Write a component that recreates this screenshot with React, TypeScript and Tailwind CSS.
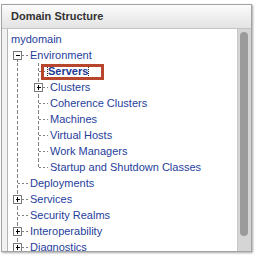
import React from "react";

type Vert = "none" | "full" | "top" | "bottom";
type Box = "plus" | "minus" | null;

type Col = { vert: Vert; horiz?: boolean; box?: Box };

type Node = {
  label: string;
  cols: Col[];
  selected?: boolean;
};

const LINE = "#808080";

function Connector({ vert, horiz, box, offset }: Col & { offset: number }) {
  const cx = offset + 0.5;
  return (
    <svg width="20" height="16" className="shrink-0 block" shapeRendering="crispEdges">
      {vert === "full" && (
        <line x1={cx} y1={0} x2={cx} y2={16} stroke={LINE} strokeDasharray="3 2" />
      )}
      {vert === "top" && <line x1={cx} y1={0} x2={cx} y2={8} stroke={LINE} strokeDasharray="3 2" />}
      {vert === "bottom" && (
        <line x1={cx} y1={box ? 13 : 8} x2={cx} y2={16} stroke={LINE} strokeDasharray="2 2" />
      )}
      {horiz && (
        <line x1={box ? offset + 5 : cx} y1={8.5} x2={20} y2={8.5} stroke={LINE} strokeDasharray="2 2" />
      )}
      {box && (
        <g>
          <rect x={offset - 3.5} y={4.5} width={8} height={8} fill="#fff" stroke="#7a7a7a" />
          <line x1={offset - 1} y1={8.5} x2={offset + 3} y2={8.5} stroke="#000" />
          {box === "plus" && <line x1={cx} y1={6} x2={cx} y2={11} stroke="#000" />}
        </g>
      )}
    </svg>
  );
}

const L1 = 9;
const L2 = 10;

const nodes: Node[] = [
  { label: "Environment", cols: [{ vert: "bottom", horiz: true, box: "minus" }] },
  { label: "Servers", cols: [{ vert: "full" }, { vert: "full", horiz: true }], selected: true },
  { label: "Clusters", cols: [{ vert: "full" }, { vert: "full", horiz: true, box: "plus" }] },
  { label: "Coherence Clusters", cols: [{ vert: "full" }, { vert: "full", horiz: true }] },
  { label: "Machines", cols: [{ vert: "full" }, { vert: "full", horiz: true }] },
  { label: "Virtual Hosts", cols: [{ vert: "full" }, { vert: "full", horiz: true }] },
  { label: "Work Managers", cols: [{ vert: "full" }, { vert: "full", horiz: true }] },
  { label: "Startup and Shutdown Classes", cols: [{ vert: "full" }, { vert: "top", horiz: true }] },
  { label: "Deployments", cols: [{ vert: "full", horiz: true }] },
  { label: "Services", cols: [{ vert: "full", horiz: true, box: "plus" }] },
  { label: "Security Realms", cols: [{ vert: "full", horiz: true }] },
  { label: "Interoperability", cols: [{ vert: "full", horiz: true, box: "plus" }] },
  { label: "Diagnostics", cols: [{ vert: "full", horiz: true, box: "plus" }] },
];

function TreeRow({ node }: { node: Node }) {
  return (
    <div className="relative flex h-4 items-center whitespace-nowrap">
      {node.cols.map((c, i) => (
        <Connector key={i} {...c} offset={i === 0 ? L1 : L2} />
      ))}
      {node.selected ? (
        <>
          <span className="ml-0 font-bold text-[#1b3a94] outline outline-1 outline-dotted outline-[#2b2b2b] leading-[11px]">
            {node.label}
          </span>
          <div className="absolute left-[33px] top-[1px] h-[16px] w-[63px] border-[3px] border-[#b8462c]" />
        </>
      ) : (
        <span className="ml-[2px] text-[#1f3e9c]">{node.label}</span>
      )}
    </div>
  );
}

export default function App() {
  return (
    <div className="w-[261px] h-[257px] bg-white pt-[4px] pl-[1px] font-['Liberation_Sans',Arial,sans-serif]">
      <div className="w-[251px] h-[248px] border border-[#a3a3a3] bg-[#f1f1f1] shadow-[1px_1px_2px_rgba(0,0,0,0.35)] flex flex-col">
        <div className="h-[24px] shrink-0 border-b border-[#c4c4c4] bg-gradient-to-b from-[#fbfbfb] to-[#e3e3e3] pl-[9px] flex items-center text-[11px] font-bold text-[#333]">
          Domain Structure
        </div>
        <div className="flex flex-1 min-h-0 pl-[5px]">
          <div className="flex-1 min-w-0 border-l border-[#b4b4b4] bg-white overflow-hidden pt-[2px] text-[11px] leading-4">
            <div className="h-4 flex items-center pl-[3px] text-[#1f3e9c]">mydomain</div>
            {nodes.map((n) => (
              <TreeRow key={n.label} node={n} />
            ))}
          </div>
          <div className="w-[14px] shrink-0 bg-[#d5d5d5] border-l border-[#c9c9c9] pt-[3px] pl-[2px]">
            <div className="w-[8px] h-[204px] rounded-full bg-[#9b9b9b]" />
          </div>
        </div>
      </div>
    </div>
  );
}
